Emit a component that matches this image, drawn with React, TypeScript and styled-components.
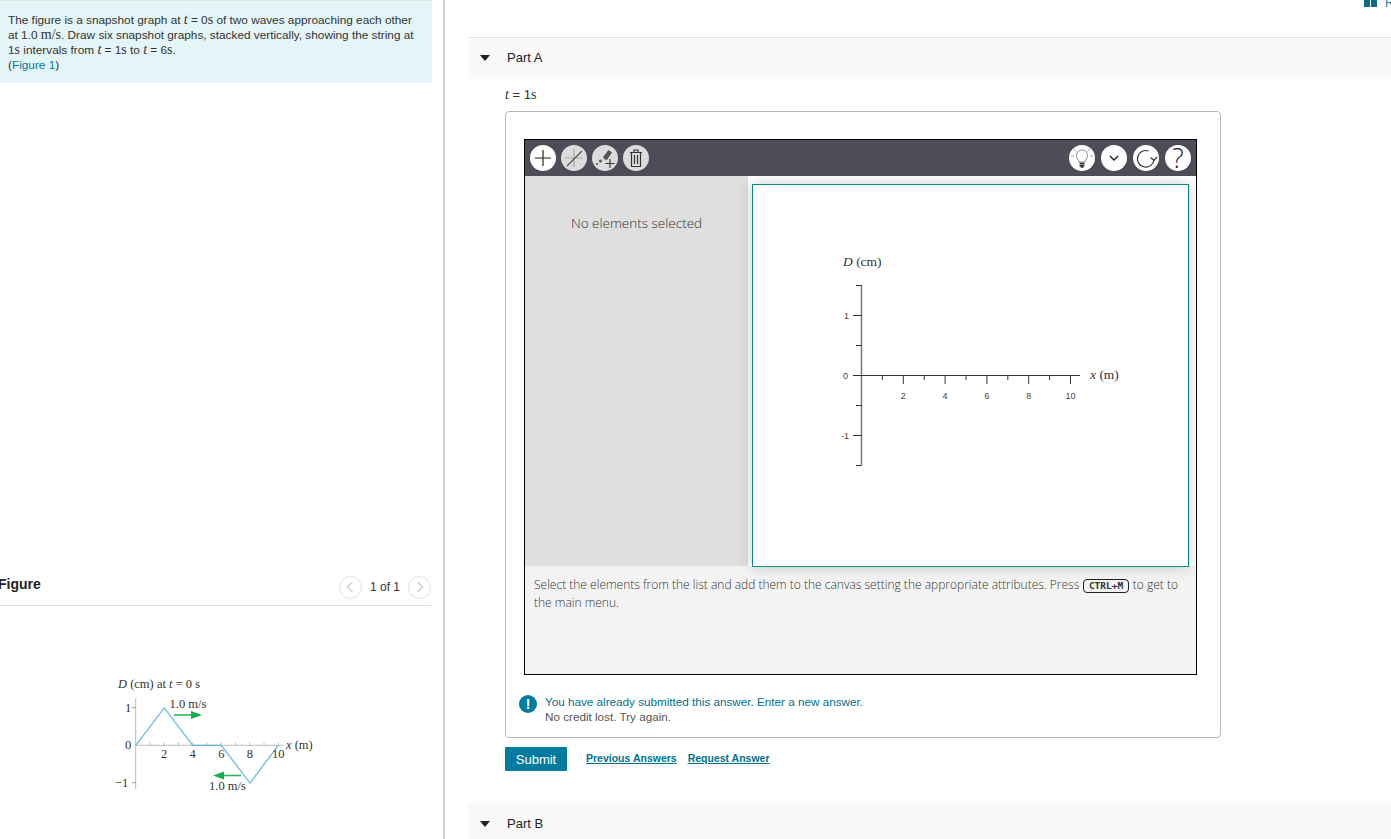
import React from 'react';
import styled, { createGlobalStyle } from 'styled-components';

const GlobalStyle = createGlobalStyle`
  html, body {
    margin: 0;
    padding: 0;
    height: 839px;
    overflow: hidden;
    background: #fff;
    font-family: "Liberation Sans", Arial, sans-serif;
    color: #333;
  }
`;

const Page = styled.div`
  display: flex;
  position: relative;
  width: 1391px;
  height: 839px;
  overflow: hidden;
`;

const LeftPane = styled.aside`
  width: 443px;
  flex: none;
  border-right: 2px solid #c6d6e2;
  overflow: hidden;
`;

const Intro = styled.div`
  width: 416px;
  height: 70px;
  padding: 12px 8px 0;
  margin-bottom: 486px;
  border-top: 1px solid #dbe3e6;
  background: #e4f5f7;
  font-size: 11.8px;
  line-height: 15px;
`;

const Math = styled.span`
  font-family: "Liberation Serif", "DejaVu Serif", serif;
  font-size: 14px;
  line-height: 14px;
`;

const MathVar = styled(Math)`
  font-style: italic;
`;

const FigureLink = styled.a`
  color: #007c9e;
`;

const FigureHead = styled.div`
  display: flex;
  align-items: center;
  width: 431px;
  height: 36px;
  border-bottom: 1px solid #ddd;
`;

const FigureTitle = styled.h2`
  flex: 1;
  margin: 0 0 6px -2px;
  font-size: 14px;
  line-height: 18px;
  color: #222;
`;

const Pager = styled.div`
  display: flex;
  align-items: center;
  gap: 8px;
  font-size: 12px;
  color: #333;
`;

const PageButton = styled.span`
  display: flex;
  align-items: center;
  justify-content: center;
  width: 21px;
  height: 21px;
  border: 1px solid #e2e2e2;
  border-radius: 50%;
`;

const FigureDrawing = styled.svg`
  display: block;
  width: 230px;
  height: 130px;
  margin: 64px 0 0 100px;
  font-family: "Liberation Serif", serif;
  font-size: 12.5px;
  fill: #333;
`;

const RightPane = styled.main`
  flex: 1;
  padding: 37px 0 0 23px;
  min-width: 0;
`;

const PartHeader = styled.div<{ $last?: boolean }>`
  display: flex;
  align-items: center;
  height: ${(p) => (p.$last ? '31px' : '39px')};
  padding: ${(p) => (p.$last ? '5px 0 0 12px' : '0 0 2px 12px')};
  border-top: ${(p) => (p.$last ? 'none' : '1px solid #e2e2e2')};
  background: #f9f9f9;
  gap: 17px;
  font-size: 13px;
  color: #222;
`;

const Caret = styled.span`
  width: 0;
  height: 0;
  border-left: 5px solid transparent;
  border-right: 5px solid transparent;
  border-top: 6px solid #222;
`;

const PartBody = styled.div`
  padding-left: 37px;
`;

const TimeLabel = styled.div`
  height: 32px;
  padding-top: 8px;
  box-sizing: border-box;
  font-size: 13px;
  line-height: 16px;
`;

const Card = styled.section`
  width: 696px;
  height: 598px;
  border: 1px solid #b8b8b8;
  border-radius: 4px;
  padding: 27px 0 0 18px;
`;

const Tool = styled.div`
  width: 671px;
  height: 534px;
  border: 1px solid #000;
  display: flex;
  flex-direction: column;
`;

const Toolbar = styled.div`
  position: relative;
  z-index: 2;
  display: flex;
  align-items: center;
  justify-content: space-between;
  height: 36px;
  flex: none;
  padding: 0 5px;
  background: #4d4d57;
`;

const ToolGroup = styled.div<{ $wide?: boolean }>`
  display: flex;
  gap: ${(p) => (p.$wide ? '6px' : '5px')};
`;

const ToolButton = styled.span<{ $active?: boolean }>`
  display: flex;
  align-items: center;
  justify-content: center;
  width: 26px;
  height: 26px;
  border-radius: 50%;
  background: ${(p) => (p.$active ? '#fff' : '#dcdcdc')};
  color: #222;
`;

const HelpGlyph = styled.span`
  font-family: "Open Sans", sans-serif;
  font-size: 27px;
  line-height: 26px;
  font-weight: 300;
`;

const Workspace = styled.div`
  display: flex;
  height: 390px;
  flex: none;
`;

const SidePanel = styled.div`
  width: 223px;
  flex: none;
  background: #dfdfdf;
  text-align: center;
  padding-top: 38px;
  box-sizing: border-box;
  font-family: "Open Sans", sans-serif;
  font-size: 13.5px;
  font-weight: 300;
  line-height: 18px;
  color: #333;
`;

const CanvasWrap = styled.div`
  position: relative;
  z-index: 1;
  flex: 1;
  padding: 8px 7px 0 4px;
`;

const Canvas = styled.svg`
  display: block;
  width: 435px;
  height: 381px;
  border: 1px solid #008b8b;
  background: #fff;
  box-shadow: 0 0 14px rgba(0, 0, 0, 0.2);
  font-family: "Liberation Serif", "DejaVu Serif", serif;
  font-size: 13.5px;
  fill: #333;
`;

const TickText = styled.text`
  font-family: "Liberation Sans", sans-serif;
  font-size: 9px;
  fill: #444;
`;

const Caption = styled.div`
  flex: 1;
  background: #f3f3f3;
  padding: 10px 10px 0 9px;
  font-family: "Open Sans", sans-serif;
  font-size: 12px;
  font-weight: 300;
  line-height: 18px;
  color: #333;
`;

const Kbd = styled.kbd`
  display: inline-block;
  font-family: "DejaVu Sans Mono", monospace;
  font-size: 9.5px;
  line-height: 12px;
  font-weight: 700;
  padding: 0 4.5px;
  margin: 0 1px;
  border: 1px solid #222;
  border-radius: 4px;
  color: #333;
`;

const Message = styled.div`
  display: flex;
  gap: 8px;
  margin: 19px 0 0 -5px;
  font-size: 11.7px;
  line-height: 15px;
  color: #555;
`;

const MessageIcon = styled.span`
  flex: none;
  display: flex;
  align-items: center;
  justify-content: center;
  width: 18px;
  height: 18px;
  margin-top: 1px;
  border-radius: 50%;
  background: #007c9e;
  color: #fff;
  font-size: 14px;
  font-weight: 700;
`;

const MessageHead = styled.div`
  color: #00718f;
`;

const Actions = styled.div`
  display: flex;
  align-items: center;
  height: 24px;
  margin: 9px 0 32px;
`;

const SubmitButton = styled.button`
  width: 62px;
  height: 24px;
  margin-right: 19px;
  padding: 0;
  border: none;
  border-radius: 1px;
  background: #007c9e;
  color: #fff;
  font-family: "Liberation Sans", sans-serif;
  font-size: 13px;
`;

const ActionLink = styled.a`
  margin: 0 11px 2px 0;
  color: #00718f;
  font-size: 10.5px;
  font-weight: 700;
  text-decoration: underline;
`;

const CornerMark = styled.div`
  position: absolute;
  top: 0;
  right: 0;
  display: flex;
  align-items: flex-start;
  gap: 1px;
  height: 7px;
  overflow: hidden;
`;

const CornerBlock = styled.span`
  width: 6px;
  height: 7px;
  background: #0c6a88;
`;

const CornerLetter = styled.span`
  margin-left: 7px;
  width: 6px;
  font-size: 12px;
  line-height: 7px;
  color: #1a7fb5;
  overflow: hidden;
`;

const Stroke = { fill: 'none', stroke: '#333', strokeWidth: 1 };

const AxisGraph = () => {
  const xTicks = Array.from({ length: 10 }, (_, i) => i + 1);
  const yTicks = [-1.5, -1, -0.5, 0.5, 1, 1.5];
  const xAt = (v: number) => 861.5 + v * 20.9;
  const yAt = (v: number) => 375.5 - v * 60;
  return (
    <Canvas viewBox="753 185 435 381">
      <text x="843" y="266">
        <tspan fontStyle="italic">D</tspan> (cm)
      </text>
      <line x1="861.5" y1="285" x2="861.5" y2="465.5" stroke="#777" strokeWidth="1.5" />
      <line x1="853" y1="375.5" x2="1080" y2="375.5" {...Stroke} />
      {yTicks.map((v) => (
        <line
          key={v}
          x1={Number.isInteger(v) ? 853 : 856}
          y1={yAt(v)}
          x2="861.5"
          y2={yAt(v)}
          {...Stroke}
        />
      ))}
      {xTicks.map((v) => (
        <line
          key={v}
          x1={xAt(v)}
          y1="375.5"
          x2={xAt(v)}
          y2={v % 2 === 0 ? 384 : 380}
          {...Stroke}
        />
      ))}
      {xTicks
        .filter((v) => v % 2 === 0)
        .map((v) => (
          <TickText key={v} x={xAt(v)} y="399" textAnchor="middle">
            {v}
          </TickText>
        ))}
      <TickText x="844" y="319">1</TickText>
      <TickText x="843" y="379">0</TickText>
      <TickText x="841" y="439">-1</TickText>
      <text x="1090" y="379">
        <tspan fontStyle="italic">x</tspan> (m)
      </text>
    </Canvas>
  );
};

const WaveFigure = () => {
  const ticks = [1, 2, 3, 4, 5, 6, 7, 8, 9, 10];
  return (
    <FigureDrawing viewBox="100 670 230 130">
      <text x="118" y="688">
        <tspan fontStyle="italic">D</tspan> (cm) at <tspan fontStyle="italic">t</tspan> = 0 s
      </text>
      <line x1="135.7" y1="698" x2="135.7" y2="789" stroke="#bbb" />
      <line x1="132" y1="707.7" x2="135.7" y2="707.7" stroke="#999" />
      <line x1="132" y1="782.7" x2="135.7" y2="782.7" stroke="#999" />
      <line x1="135.7" y1="745.3" x2="283" y2="745.3" stroke="#bbb" />
      {ticks.map((t) => (
        <line
          key={t}
          x1={135.7 + t * 14.26}
          y1="742.5"
          x2={135.7 + t * 14.26}
          y2="745.3"
          stroke="#bbb"
        />
      ))}
      <polyline
        points="135.7,745.3 164.3,708 192.7,745.3 221.3,745.3 250,783 278.3,745.3"
        fill="none"
        stroke="#62b5e5"
        strokeWidth="1.2"
      />
      <line x1="174" y1="715" x2="192" y2="715" stroke="#2cb565" strokeWidth="1.6" />
      <polygon points="191,711 202,715 191,719" fill="#12b04e" />
      <line x1="223" y1="775.5" x2="241" y2="775.5" stroke="#2cb565" strokeWidth="1.6" />
      <polygon points="224,771.5 213,775.5 224,779.5" fill="#12b04e" />
      <text x="125" y="712">1</text>
      <text x="125" y="749">0</text>
      <text x="115" y="787">−1</text>
      <text x="169.500" y="708">1.0 m/s</text>
      <text x="209" y="790">1.0 m/s</text>
      <text x="286" y="749">
        <tspan fontStyle="italic">x</tspan> (m)
      </text>
      {[2, 4, 6, 8, 10].map((t) => (
        <text key={t} x={135.7 + t * 14.26} y="758" textAnchor="middle">
          {t}
        </text>
      ))}
    </FigureDrawing>
  );
};

const IconPlus = () => (
  <svg width="20" height="20" viewBox="0 0 20 20" fill="none" stroke="#222" strokeWidth="1.2">
    <path d="M10 2v16M2 10h16" />
  </svg>
);

const IconCross = () => (
  <svg width="24" height="24" viewBox="0 0 24 24" fill="none" strokeWidth="1.2">
    <path d="M12 3v18M3 12h18" stroke="#a8a8a8" />
    <path d="M5 20L20 5" stroke="#555" />
  </svg>
);

const IconMarker = () => (
  <svg width="24" height="24" viewBox="0 0 24 24">
    <path d="M10 11l5.500-7 3.500 2.500-5 7.500-3-1z" fill="#555" />
    <circle cx="7.500" cy="15" r="1.500" fill="#555" />
    <circle cx="4" cy="18" r="1.100" fill="#555" />
    <path d="M17 13v9M12.500 17.500h9" stroke="#333" strokeWidth="1.100" />
  </svg>
);

const IconTrash = () => (
  <svg width="16" height="20" viewBox="0 0 16 20" fill="none" stroke="#333" strokeWidth="1.200">
    <path d="M2 4.500h12M6 4.500V2h4v2.500M3.500 4.500V18.500h9V4.500" />
    <path d="M6.500 7v9M9.500 7v9" />
  </svg>
);

const IconBulb = () => (
  <svg width="24" height="24" viewBox="0 0 24 24" fill="none" stroke="#888" strokeWidth="1">
    <path d="M9 16c0-2-2.500-3-2.500-6.500a5.500 5.500 0 0 1 11 0C17.500 13 15 14 15 16z" />
    <path d="M9.500 17.500h5M9.500 19.500h5M10.500 21h3" stroke="#333" strokeWidth="1.400" />
    <path d="M3 2l3.500 3.500M21 2l-3.500 3.500M1 10h3M20 10h3" stroke="#aaa" />
  </svg>
);

const IconChevron = () => (
  <svg width="12" height="8" viewBox="0 0 12 8" fill="none" stroke="#222" strokeWidth="1.5">
    <path d="M2 2l4 4 4-4" />
  </svg>
);

const IconRedo = () => (
  <svg width="24" height="24" viewBox="0 0 24 24" fill="none" stroke="#333" strokeWidth="1.200">
    <path d="M20 13.500A8.300 8.300 0 1 1 14.500 5" />
    <path d="M16.500 11.500l3.500 3 3-3.500" />
  </svg>
);

const IconPagePrev = () => (
  <svg width="8" height="12" viewBox="0 0 8 12" fill="none" stroke="#cbd3da" strokeWidth="1.500">
    <path d="M6.500 1L1.500 6l5 5" />
  </svg>
);

const IconPageNext = () => (
  <svg width="8" height="12" viewBox="0 0 8 12" fill="none" stroke="#cbd3da" strokeWidth="1.500">
    <path d="M1.500 1l5 5-5 5" />
  </svg>
);

export default function App() {
  return (
    <Page>
      <GlobalStyle />
      <LeftPane>
        <Intro>
          The figure is a snapshot graph at <MathVar>t</MathVar> = 0<Math>s</Math> of two waves
          approaching each other at 1.0 <Math>m/s</Math>. Draw six snapshot graphs, stacked
          vertically, showing the string at 1<Math>s</Math> intervals from <MathVar>t</MathVar> = 1
          <Math>s</Math> to <MathVar>t</MathVar> = 6<Math>s</Math>.
          <br />
          (<FigureLink>Figure 1</FigureLink>)
        </Intro>
        <FigureHead>
          <FigureTitle>Figure</FigureTitle>
          <Pager>
            <PageButton>
              <IconPagePrev />
            </PageButton>
            <span>1 of 1</span>
            <PageButton>
              <IconPageNext />
            </PageButton>
          </Pager>
        </FigureHead>
        <WaveFigure />
      </LeftPane>
      <RightPane>
        <PartHeader>
          <Caret />
          Part A
        </PartHeader>
        <PartBody>
          <TimeLabel>
            <MathVar>t</MathVar> = 1<Math>s</Math>
          </TimeLabel>
          <Card>
            <Tool>
              <Toolbar>
                <ToolGroup>
                  <ToolButton $active>
                    <IconPlus />
                  </ToolButton>
                  <ToolButton>
                    <IconCross />
                  </ToolButton>
                  <ToolButton>
                    <IconMarker />
                  </ToolButton>
                  <ToolButton>
                    <IconTrash />
                  </ToolButton>
                </ToolGroup>
                <ToolGroup $wide>
                  <ToolButton $active>
                    <IconBulb />
                  </ToolButton>
                  <ToolButton $active>
                    <IconChevron />
                  </ToolButton>
                  <ToolButton $active>
                    <IconRedo />
                  </ToolButton>
                  <ToolButton $active>
                    <HelpGlyph>?</HelpGlyph>
                  </ToolButton>
                </ToolGroup>
              </Toolbar>
              <Workspace>
                <SidePanel>No elements selected</SidePanel>
                <CanvasWrap>
                  <AxisGraph />
                </CanvasWrap>
              </Workspace>
              <Caption>
                Select the elements from the list and add them to the canvas setting the appropriate
                attributes. Press <Kbd>CTRL+M</Kbd> to get to the main menu.
              </Caption>
            </Tool>
            <Message>
              <MessageIcon>!</MessageIcon>
              <div>
                <MessageHead>You have already submitted this answer. Enter a new answer.</MessageHead>
                <div>No credit lost. Try again.</div>
              </div>
            </Message>
          </Card>
          <Actions>
            <SubmitButton>Submit</SubmitButton>
            <ActionLink>Previous Answers</ActionLink>
            <ActionLink>Request Answer</ActionLink>
          </Actions>
        </PartBody>
        <PartHeader $last>
          <Caret />
          Part B
        </PartHeader>
      </RightPane>
      <CornerMark>
        <CornerBlock />
        <CornerBlock />
        <CornerLetter>R</CornerLetter>
      </CornerMark>
    </Page>
  );
}
